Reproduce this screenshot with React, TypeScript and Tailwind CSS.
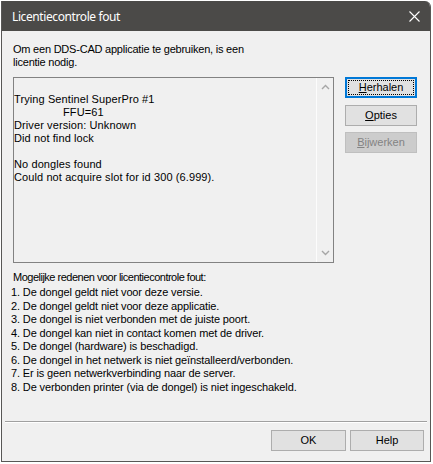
import React from "react";

const Btn = ({
  children,
  focused,
  disabled,
  className = "",
}: {
  children: React.ReactNode;
  focused?: boolean;
  disabled?: boolean;
  className?: string;
}) => (
  <div
    className={
      "relative flex items-center justify-center " +
      (focused
        ? "border-2 border-[#0078d7] bg-[#e1e1e1] "
        : disabled
        ? "border border-[#bfbfbf] bg-[#cccccc] text-[#838383] "
        : "border border-[#adadad] bg-[#e1e1e1] ") +
      className
    }
  >
    {focused && <span className="absolute inset-[1px] border border-dotted border-black" />}
    <span className="leading-none">{children}</span>
  </div>
);

export default function App() {
  const reasons = [
    "1. De dongel geldt niet voor deze versie.",
    "2. De dongel geldt niet voor deze applicatie.",
    "3. De dongel is niet verbonden met de juiste poort.",
    "4. De dongel kan niet in contact komen met de driver.",
    "5. De dongel (hardware) is beschadigd.",
    "6. De dongel in het netwerk is niet geïnstalleerd/verbonden.",
    "7. Er is geen netwerkverbinding naar de server.",
    "8. De verbonden printer (via de dongel) is niet ingeschakeld.",
  ];
  return (
    <div className="w-[433px] h-[464px] bg-white">
      <div
        className="ml-px mt-px w-[430px] h-[461px] flex flex-col bg-[#f0f0f0] border-x border-b border-[#585756] rounded-tr-[6px] overflow-hidden text-[11px] text-black"
        style={{ fontFamily: '"Liberation Sans", Arial, sans-serif' }}
      >
        {/* Title bar */}
        <div className="h-[30px] shrink-0 bg-[#4b4a48] flex items-center justify-between pl-[10px] pr-[10px]">
          <span
            className="text-white text-[12px] tracking-[-0.4px] leading-none mt-[1px]"
            style={{ fontFamily: '"Noto Sans", "Open Sans", sans-serif' }}
          >
            Licentiecontrole fout
          </span>
          <svg width="11" height="11" viewBox="0 0 11 11" className="mt-[1px]">
            <path d="M0.5 0.5 L10.5 10.5 M10.5 0.5 L0.5 10.5" stroke="#ffffff" strokeWidth="1.1" />
          </svg>
        </div>

        {/* Body */}
        <div className="flex-1 flex flex-col pl-[11px] pr-[2px]">
          <div className="mt-[12px] leading-[13px] tracking-[-0.22px]">
            <div>Om een DDS-CAD applicatie te gebruiken, is een</div>
            <div>licentie nodig.</div>
          </div>

          <div className="mt-[8px] flex">
            {/* Text box */}
            <div className="w-[321px] h-[186px] border border-[#828282] flex">
              <div className="flex-1 pl-[0px] pt-[2px] leading-[13px] tracking-[0.1px]">
                <div>&nbsp;</div>
                <div>Trying Sentinel SuperPro #1</div>
                <div className="pl-[49px]">FFU=61</div>
                <div>Driver version: Unknown</div>
                <div>Did not find lock</div>
                <div>&nbsp;</div>
                <div>No dongles found</div>
                <div>Could not acquire slot for id 300 (6.999).</div>
              </div>
              <div className="w-[17px] border-l border-[#fcfcfc] flex flex-col items-center justify-between py-[6px]">
                <svg width="9" height="6" viewBox="0 0 9 6">
                  <path d="M1 5 L4.5 1.5 L8 5" stroke="#a6a6a6" strokeWidth="1.4" fill="none" />
                </svg>
                <svg width="9" height="6" viewBox="0 0 9 6">
                  <path d="M1 1 L4.5 4.5 L8 1" stroke="#a6a6a6" strokeWidth="1.4" fill="none" />
                </svg>
              </div>
            </div>

            {/* Buttons */}
            <div className="ml-[11px] flex flex-col">
              <Btn focused className="w-[72px] h-[21px]">
                <u>H</u>erhalen
              </Btn>
              <Btn className="w-[72px] h-[21px] mt-[7px]">
                <u>O</u>pties
              </Btn>
              <Btn disabled className="w-[72px] h-[21px] mt-[6px]">
                <u>B</u>ijwerken
              </Btn>
            </div>
          </div>

          <div className="mt-[8px] leading-[13px] tracking-[-0.5px]">
            Mogelijke redenen voor licentiecontrole fout:
          </div>
          <div className="mt-[2px] -ml-[2px] leading-[13.5px] tracking-[-0.13px]">
            {reasons.map((r) => (
              <div key={r}>{r}</div>
            ))}
          </div>
        </div>

        {/* Separator and bottom buttons */}
        <div className="mx-[3px] h-[2px] border-t border-[#a0a0a0] border-b border-b-white" />
        <div className="flex justify-end gap-[4px] pr-[6px] pt-[7px] pb-[10px]">
          <Btn className="w-[75px] h-[21px]">OK</Btn>
          <Btn className="w-[74px] h-[21px]">Help</Btn>
        </div>
      </div>
    </div>
  );
}
